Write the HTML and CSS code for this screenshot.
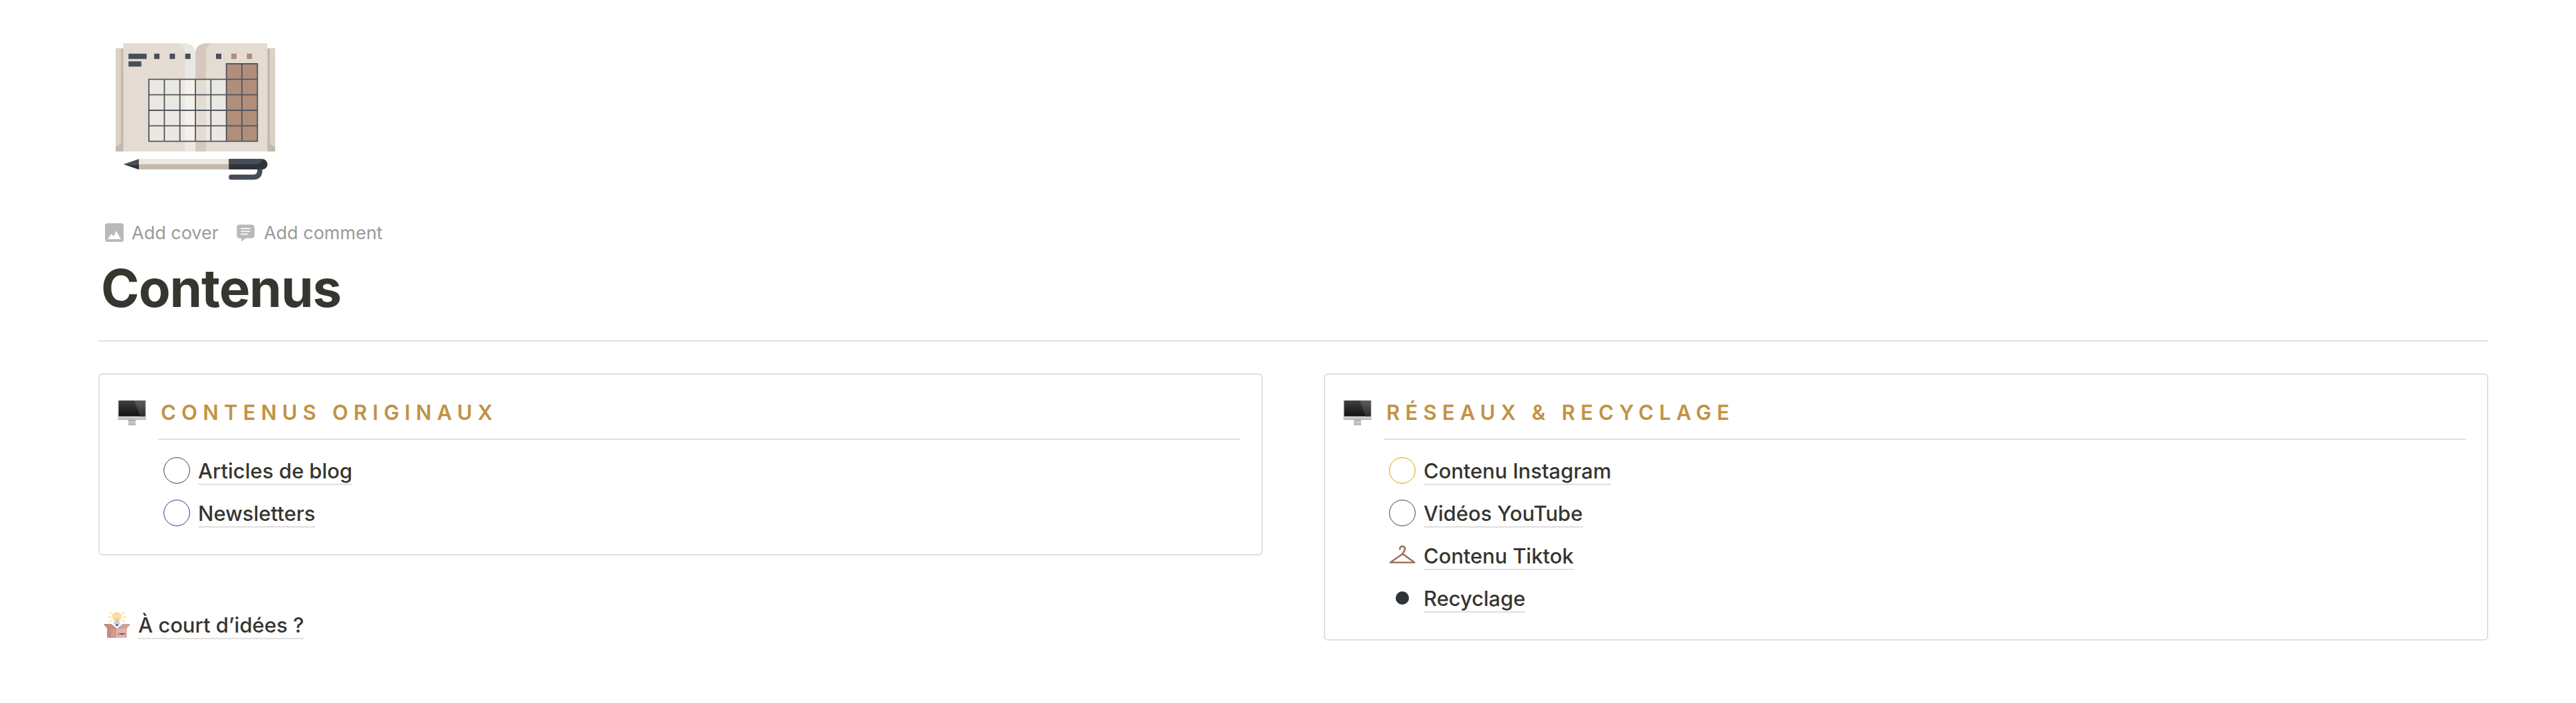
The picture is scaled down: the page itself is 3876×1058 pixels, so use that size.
FILE: index.html
```
<!DOCTYPE html>
<html lang="fr">

<head>
    <meta charset="UTF-8">
    <meta name="viewport" content="width=device-width, initial-scale=1.0">
    <title>Contenus</title>
    <link rel="stylesheet" href="styles.css">
</head>

<body>
    <!-- shared icons -->
    <svg class="defs" width="0" height="0">
        <defs>
            <linearGradient id="screen" x1="0" y1="0" x2="0" y2="1">
                <stop offset="0" stop-color="#404040" />
                <stop offset="1" stop-color="#111" />
            </linearGradient>
            <linearGradient id="shine" x1="0" y1="0" x2="0" y2="1">
                <stop offset="0" stop-color="#5c5c5c" />
                <stop offset="1" stop-color="#2c2c2c" />
            </linearGradient>
            <linearGradient id="metal" x1="0" y1="0" x2="0" y2="1">
                <stop offset="0" stop-color="#d9d9db" />
                <stop offset="1" stop-color="#b4b4b8" />
            </linearGradient>
        </defs>
        <symbol id="desktop" viewBox="0 0 44 40">
            <path d="M16 30h11v9H16z" fill="url(#metal)" />
            <path d="M16 30h11v2.500H16z" fill="#a5a5aa" />
            <rect x="0.500" y="1" width="42" height="30" rx="0.800" fill="#c9cbcb" />
            <rect x="0.500" y="26" width="42" height="5" fill="url(#metal)" />
            <rect x="1.500" y="2" width="40" height="23.500" fill="url(#screen)" />
            <path d="M25 2h16.500v23.500H34z" fill="url(#shine)" />
        </symbol>
    </svg>

    <main class="page">
        <svg class="page-icon" viewBox="102 24 720 720">
            <path d="M102 98h36v466h-36zM786 98h36v466h-36z" fill="#c4b9ad" />
            <path d="M102 98h24v420q0 20-24 23zM822 98h-24v420q0 20 24 23z" fill="#dbd2c3" />
            <path d="M380 75h34q48 4 48 46v443h-60z" fill="#ebe8e3" />
            <path d="M137 75h239q38 4 38 46v443H137z" fill="#e4dcd3" />
            <path d="M550 75h-40q-48 4-48 46v443h60z" fill="#d5c9be" />
            <path d="M787 75H548q-38 4-38 46v443h277z" fill="#e4dcd3" />
            <path d="M160 122h82v24h-82zM160 157h58v24h-58zM276 122h24v24h-24zM346 122h24v24h-24zM416 122h24v24h-24zM555 122h24v24h-24z" fill="#474e58" />
            <path d="M624 122h24v24h-24zM694 122h24v24h-24z" fill="#b18e79" />
            <path d="M252 238h350v280H252z" fill="#ebe8e3" />
            <path d="M414 238h48v280h-48z" fill="#f4f1ec" />
            <path d="M462 238h48v280h-48z" fill="#e4dcd3" />
            <path d="M602 168h140v350H602z" fill="#b18e79" />
            <path d="M252 518V238h350v-70h140v350zM602 238h140M252 308h490M252 378h490M252 448h490M322 238v280M392 238v280M462 238v280M532 238v280M602 238v280M672 168v350" fill="none" stroke="#50565f" stroke-width="5.500" />
            <path d="M753 640v12q-2 27-27 28H624" fill="none" stroke="#474e58" stroke-width="23" stroke-linecap="round" />
            <path d="M206 598h408v24H206z" fill="#ebe8e3" />
            <path d="M206 621h408v24H206z" fill="#c4b9ad" />
            <path d="M137 622l70-24v24z" fill="#474e58" />
            <path d="M137 621.500h70v24z" fill="#2f3439" />
            <path d="M613 598h151a23.500 23.500 0 0 1 0 47H613z" fill="#2f3439" />
            <path d="M613 598h152q-2 20-22 24H613z" fill="#474e58" />
        </svg>

        <div class="controls">
            <div class="control">
                <svg class="cover-icon" viewBox="0 0 28 28">
                    <rect width="28" height="28" rx="3.500" fill="#bab9b8" />
                    <path d="M4 24l5.500-8 3.500 3.500L17 11.500 24 24z" fill="#fff" />
                </svg>
                <span>Add cover</span>
            </div>
            <div class="control">
                <svg class="comment-icon" viewBox="0 0 28 28">
                    <path d="M4.500 2H22.500Q27 2 27 6.500V18Q27 22.500 22.500 22.500H14L7.700 27Q7 27.300 7 26.500V22.500H4.500Q0.300 22.500 0.300 18V6.500Q0.300 2 4.500 2z" fill="#bab9b8" />
                    <path d="M7 7.900h13M7 12.300h13M7 16.400h9" stroke="#fff" stroke-width="1.600" stroke-linecap="round" />
                </svg>
                <span>Add comment</span>
            </div>
        </div>

        <h1>Contenus</h1>
        <hr>

        <div class="columns">
            <div class="column">
                <section class="card">
                    <svg class="card-icon"><use href="#desktop" /></svg>
                    <div class="card-content">
                        <h2>CONTENUS ORIGINAUX</h2>
                        <div class="links">
                            <a class="link"><span class="icon circle brown"></span><span class="label">Articles de blog</span></a>
                            <a class="link"><span class="icon circle purple"></span><span class="label">Newsletters</span></a>
                        </div>
                    </div>
                </section>
                <a class="link ideas">
                    <svg class="icon" viewBox="0 0 40 40">
                        <path d="M9 1l3 2.500M31 1l-3 2.500M7 8.500h4M29.500 8.500h4M9 16l3-2.500M31 16l-3-2.500" stroke="#f8d88a" stroke-width="1.300" stroke-linecap="round" />
                        <path d="M20 1a7 7 0 0 1 7 7c0 4-3 5-3.500 8h-7C16 13 13 12 13 8a7 7 0 0 1 7-7z" fill="#f9dfa0" />
                        <path d="M20 1c-9 1-9 9-4 12l1 3h-.5C16 13 13 12 13 8a7 7 0 0 1 7-7z" fill="#f5cd7c" />
                        <path d="M18 11l2 1 2-1v5h-4z" fill="#f0c36c" />
                        <path d="M5 20l13 5h17v13q0 2-2 2H7q-2 0-2-2z" fill="#c68c84" />
                        <path d="M11 22l8-1v19h-8z" fill="#cf9a92" />
                        <path d="M19 24l16-4v18q0 2-2 2H19z" fill="#e3b5af" />
                        <path d="M1 19h11l8 7.500H6L0 20z" fill="#c68c84" />
                        <path d="M39 19H28l-8.500 7.500H34L40 20z" fill="#d2a29b" />
                        <path d="M12 19l8 7 8-7z" fill="#fff" />
                        <path d="M15.500 16h9v3l-2 1.500h-5l-2-1.500z" fill="#c3cdf0" />
                        <path d="M18 19.800h4v1.500l-2 1-2-1z" fill="#28409b" />
                        <circle cx="22.500" cy="35.500" r="1.700" fill="#f09a9e" />
                        <circle cx="32" cy="35.500" r="1.700" fill="#f09a9e" />
                        <path d="M23 33v1M31.500 33v1M25.500 33.500q1 2 2 .3q1 1.700 2-.3" fill="none" stroke="#3d2d30" stroke-width="1.200" stroke-linecap="round" />
                    </svg>
                    <span class="label">À court d’idées ?</span>
                </a>
            </div>

            <div class="column">
                <section class="card">
                    <svg class="card-icon"><use href="#desktop" /></svg>
                    <div class="card-content">
                        <h2>RÉSEAUX &amp; RECYCLAGE</h2>
                        <div class="links">
                            <a class="link"><span class="icon circle yellow"></span><span class="label">Contenu Instagram</span></a>
                            <a class="link"><span class="icon circle brown"></span><span class="label">Vidéos YouTube</span></a>
                            <a class="link">
                                <svg class="icon" viewBox="0 0 40 40">
                                    <path d="M16.300 10.500C16 4.500 24.500 4.700 24 10.500C23.500 14.500 20.500 14 20.500 18.500M20.500 17.500L2 30.500H38.300L20.500 17.500" fill="none" stroke="#a0705a" stroke-width="2.700" stroke-linecap="round" stroke-linejoin="round" />
                                </svg>
                                <span class="label">Contenu Tiktok</span>
                            </a>
                            <a class="link"><span class="icon dot"></span><span class="label">Recyclage</span></a>
                        </div>
                    </div>
                </section>
            </div>
        </div>
    </main>
</body>

</html>
```
FILE: styles.css
```
* {
    box-sizing: border-box;
}

body {
    margin: 0;
    background-color: #fff;
    color: #37352f;
    font-family: Inter, "Liberation Sans", sans-serif;
}

.defs {
    display: block;
}

.page {
    padding: 48px 132px 0 148px;
}

.page-icon {
    display: block;
    width: 240px;
    height: 240px;
    margin-left: 26px;
}

.controls {
    display: flex;
    gap: 27px;
    margin-top: 34px;
    padding-left: 10px;
}

.control {
    display: flex;
    align-items: center;
    height: 56px;
    color: #9b9a97;
    font-size: 27px;
}

.control span {
    padding-top: 1px;
}

.cover-icon,
.comment-icon {
    width: 28px;
    height: 28px;
    margin-right: 12px;
}

.comment-icon {
    margin-right: 13px;
}

h1 {
    margin: 8px 0 0 4px;
    font-size: 78px;
    font-weight: 700;
    line-height: 96px;
    letter-spacing: -1px;
}

hr {
    height: 2px;
    margin: 30px 0 48px;
    border: none;
    background-color: #dfdfde;
}

.columns {
    display: grid;
    grid-template-columns: 1fr 1fr;
    gap: 92px;
    align-items: start;
}

.card {
    display: flex;
    gap: 17px;
    padding: 33px 32px 30px 27px;
    border: 2px solid #dfdfde;
    border-radius: 6px;
}

.card-icon {
    flex: none;
    width: 44px;
    height: 40px;
    margin-top: 4px;
}

.card-content {
    flex: 1;
}

h2 {
    margin: 0;
    padding: 0 0 15px 4px;
    border-bottom: 2px solid #dfdfde;
    color: #c29243;
    font-size: 31px;
    font-weight: 600;
    line-height: 48px;
    letter-spacing: 8.25px;
}

.links {
    padding: 14px 0 0 8px;
}

.link {
    display: flex;
    align-items: center;
    gap: 12px;
    height: 64px;
    font-size: 31px;
    font-weight: 500;
}

.label {
    margin-top: 2px;
    padding-top: 2px;
    border-bottom: 2px solid #dfdfde;
    line-height: 38px;
}

.icon {
    flex: none;
    width: 40px;
    height: 40px;
}

.circle {
    border: 1px solid;
    border-radius: 50%;
    box-shadow: inset 0 0 1px;
}

.brown {
    color: #6b5148;
}

.purple {
    color: #6940a5;
}

.yellow {
    color: #dfab2b;
}

.dot {
    width: 20px;
    height: 20px;
    margin: 0 10px;
    border-radius: 50%;
    background-color: #2f3437;
}

.ideas {
    margin-top: 72px;
    padding-left: 8px;
}
```
